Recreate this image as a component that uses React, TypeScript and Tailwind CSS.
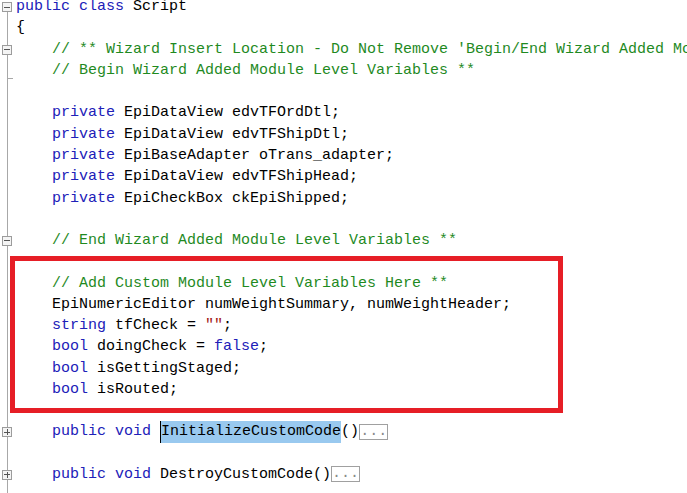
type Tok = { t: string; c?: "kw" | "cm" | "str" | "hl" };
type Gut = "open" | "openTop" | "line" | "end" | "plus" | "none";

const kw = (t: string): Tok => ({ t, c: "kw" });
const cm = (t: string): Tok => ({ t, c: "cm" });
const tx = (t: string): Tok => ({ t });

const lines: { g: Gut; indent: number; toks: Tok[]; fold?: boolean }[] = [
  { g: "openTop", indent: 0, toks: [kw("public"), tx(" "), kw("class"), tx(" Script")] },
  { g: "line", indent: 0, toks: [tx("{")] },
  { g: "open", indent: 4, toks: [cm("// ** Wizard Insert Location - Do Not Remove 'Begin/End Wizard Added Module Level Variables' **")] },
  { g: "end", indent: 4, toks: [cm("// Begin Wizard Added Module Level Variables **")] },
  { g: "line", indent: 0, toks: [] },
  { g: "line", indent: 4, toks: [kw("private"), tx(" EpiDataView edvTFOrdDtl;")] },
  { g: "line", indent: 4, toks: [kw("private"), tx(" EpiDataView edvTFShipDtl;")] },
  { g: "line", indent: 4, toks: [kw("private"), tx(" EpiBaseAdapter oTrans_adapter;")] },
  { g: "line", indent: 4, toks: [kw("private"), tx(" EpiDataView edvTFShipHead;")] },
  { g: "line", indent: 4, toks: [kw("private"), tx(" EpiCheckBox ckEpiShipped;")] },
  { g: "line", indent: 0, toks: [] },
  { g: "open", indent: 4, toks: [cm("// End Wizard Added Module Level Variables **")] },
  { g: "line", indent: 0, toks: [] },
  { g: "line", indent: 4, toks: [cm("// Add Custom Module Level Variables Here **")] },
  { g: "line", indent: 4, toks: [tx("EpiNumericEditor numWeightSummary, numWeightHeader;")] },
  { g: "line", indent: 4, toks: [kw("string"), tx(" tfCheck = "), { t: '""', c: "str" }, tx(";")] },
  { g: "line", indent: 4, toks: [kw("bool"), tx(" doingCheck = "), kw("false"), tx(";")] },
  { g: "line", indent: 4, toks: [kw("bool"), tx(" isGettingStaged;")] },
  { g: "line", indent: 4, toks: [kw("bool"), tx(" isRouted;")] },
  { g: "line", indent: 0, toks: [] },
  { g: "plus", indent: 4, fold: true, toks: [kw("public"), tx(" "), kw("void"), tx(" "), { t: "InitializeCustomCode", c: "hl" }, tx("()")] },
  { g: "line", indent: 0, toks: [] },
  { g: "plus", indent: 4, fold: true, toks: [kw("public"), tx(" "), kw("void"), tx(" DestroyCustomCode()")] },
  { g: "line", indent: 0, toks: [] },
];

const FoldBox = ({ plus }: { plus?: boolean }) => (
  <div className="relative w-[10px] h-[10px] border border-[#9c9c9c] bg-[#f4f4f4] flex items-center justify-center">
    <div className="w-[6px] h-px bg-[#555]" />
    {plus && <div className="absolute w-px h-[6px] bg-[#555]" />}
  </div>
);

const Gutter = ({ g }: { g: Gut }) => (
  <div className="w-4 shrink-0 h-full flex flex-col items-start pl-[2px]">
    {g === "line" && <div className="ml-[5px] w-px h-full bg-[#a8a8a8]" />}
    {g === "end" && (
      <div className="flex flex-col h-full">
        <div className="ml-[5px] w-px flex-1 bg-[#a8a8a8]" />
        <div className="ml-[5px] w-[6px] h-px bg-[#a8a8a8]" />
        <div className="ml-[5px] w-px h-[2px] bg-[#a8a8a8]" />
      </div>
    )}
    {(g === "open" || g === "openTop" || g === "plus") && (
      <div className="flex flex-col h-full">
        <div className={`ml-[5px] w-px h-[6px] ${g === "openTop" ? "" : "bg-[#a8a8a8]"}`} />
        <FoldBox plus={g === "plus"} />
        <div className="ml-[5px] w-px flex-1 bg-[#a8a8a8]" />
      </div>
    )}
  </div>
);

const color = (c?: Tok["c"]) =>
  c === "kw" ? "text-[#2020b8]" : c === "cm" ? "text-[#1f8a1f]" : c === "str" ? "text-[#a31515]" : "text-black";

export default function App() {
  return (
    <div className="relative w-[687px] h-[493px] overflow-hidden bg-white">
      <div
        className="flex flex-col mt-[-4px] text-[15px]"
        style={{ fontFamily: "'Liberation Mono', 'DejaVu Sans Mono', monospace" }}
      >
        {lines.map((l, i) => (
          <div key={i} className="flex h-[21.27px] items-stretch">
            <Gutter g={l.g} />
            <div className="flex items-center whitespace-pre leading-[21px]">
              <span>{" ".repeat(l.indent)}</span>
              {l.toks.map((tk, j) =>
                tk.c === "hl" ? (
                  <span key={j} className="bg-[#99c9ef] border-l border-black leading-[22px]">
                    {tk.t}
                  </span>
                ) : (
                  <span key={j} className={color(tk.c)}>
                    {tk.t}
                  </span>
                )
              )}
              {l.fold && (
                <span className="border border-[#a0a0a0] text-[#8a8a8a] leading-[14px] h-[16px]">...</span>
              )}
            </div>
          </div>
        ))}
      </div>
      {/* annotation box */}
      <div className="absolute left-[10px] top-[256px] w-[553px] h-[157px] border-[5px] border-[#e61e26]" />
    </div>
  );
}
